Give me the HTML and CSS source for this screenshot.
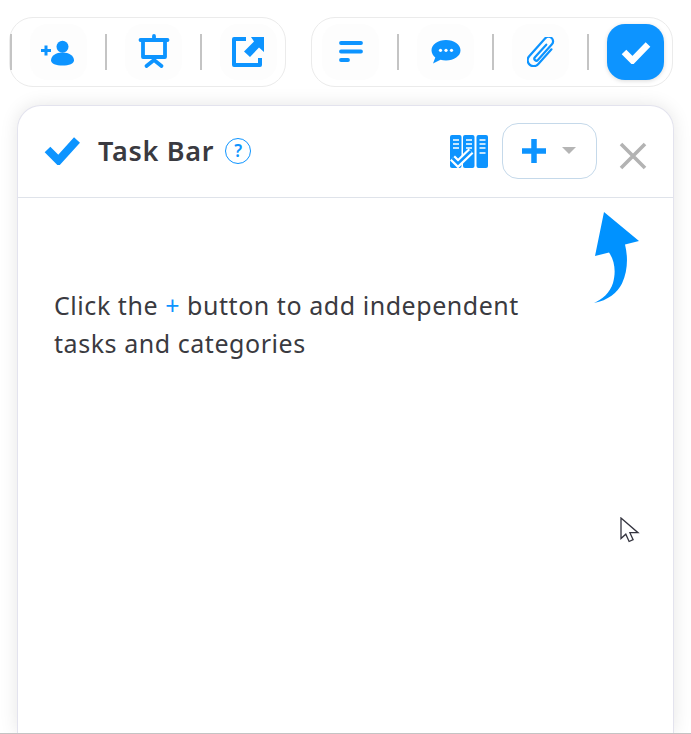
FILE: index.html
```html
<!DOCTYPE html>
<html lang="en">
<head>
    <meta charset="UTF-8">
    <meta name="viewport" content="width=device-width, initial-scale=1.0">
    <title>Task Bar</title>
    <link rel="stylesheet" href="styles.css">
</head>
<body>
    <div class="topbar">
        <div class="toolbar toolbar-left">
            <span class="divider"></span>
            <button class="tool">
                <svg width="36" height="32" viewBox="0 0 36 32"><circle cx="21.500" cy="10.700" r="6"/><path d="M10 24.500c0-5 5-8 11.500-8s11.500 3 11.500 8c0 3-5 5-11.500 5s-11.500-2-11.500-5z"/><path d="M5 9.500v10M0 14.500h10" class="line" stroke-width="3"/></svg>
            </button>
            <span class="divider"></span>
            <button class="tool">
                <svg width="34" height="36" viewBox="0 0 34 36"><path d="M3.500 6h27M6 6v17h22V6M17 2v4M9.500 32l7.500-6 7.500 6" class="line" stroke-width="3.800" stroke-linecap="round" stroke-linejoin="round"/></svg>
            </button>
            <span class="divider"></span>
            <button class="tool">
                <svg width="34" height="32" viewBox="1 0 34 32"><path d="M15 3H3v26h26v-7" class="line" stroke-width="4" stroke-linejoin="round"/><path d="M20 1h13v15l-5-4.500L19 21l-6-5.500L23 5.500z"/></svg>
            </button>
        </div>
        <div class="toolbar toolbar-right">
            <button class="tool">
                <svg width="26" height="24" viewBox="0 0 26 24"><path d="M3 3h20M3 11.500h20M3 20h7" class="line" stroke-width="3.800" stroke-linecap="round"/></svg>
            </button>
            <span class="divider"></span>
            <button class="tool">
                <svg width="30" height="26" viewBox="0 0 30 26"><path d="M15 1c8 0 14.500 4.300 14.500 10.300S23 21.500 15 21.500c-2 0-3.800-.2-5.500-.7L2 24.500l2.300-6C2 16.700.500 14.200.500 11.300.500 5.300 7 1 15 1z"/><circle cx="9.500" cy="11.300" r="1.600" class="dot"/><circle cx="15" cy="11.300" r="1.600" class="dot"/><circle cx="20.500" cy="11.300" r="1.600" class="dot"/></svg>
            </button>
            <span class="divider"></span>
            <button class="tool">
                <svg width="28" height="30" viewBox="-14 -15 28 30"><path d="M6 -9V11a6 6 0 0 1-12 0V-13a4.500 4.500 0 0 1 9 0V8a2 2 0 0 1-4 0V-9" class="line" stroke-width="2.200" stroke-linecap="round" transform="rotate(42)"/></svg>
            </button>
            <span class="divider"></span>
            <button class="tool tool-active">
                <svg width="30" height="24" viewBox="0 0 30 24"><path d="M3 12l8.500 8.500L27 4.500" class="line-white" stroke-width="6.500"/></svg>
            </button>
        </div>
    </div>

    <div class="panel">
        <div class="panel-header">
            <svg class="title-check" width="36" height="29" viewBox="0 0 36 29"><path d="M3.500 13.500l11 11L33 4" class="line" stroke-width="8"/></svg>
            <h1>Task Bar</h1>
            <span class="help">?</span>
            <div class="panel-actions">
                <svg class="book" width="38" height="34" viewBox="0 0 38 34">
                    <rect x="0" y="0" width="11.500" height="33" rx="2"/>
                    <rect x="13" y="0" width="11.500" height="33" rx="2"/>
                    <rect x="26.500" y="0" width="11.500" height="33" rx="2"/>
                    <path d="M3 5h6M3 9h6M3 13h6M16 5h6M16 9h6M16 13h6M29.500 5h6M29.500 9h6M29.500 13h6M29.500 18h6" class="line-white" stroke-width="1.500"/>
                    <path d="M2.500 23l5.500 5.500L21 16" class="line-white" stroke-width="7"/>
                    <path d="M2.500 23l5.500 5.500L21 16" class="line" stroke-width="2.600"/>
                </svg>
                <button class="add-btn">
                    <svg width="26" height="26" viewBox="0 0 26 26"><path d="M13 1v24M1 13h24" class="line" stroke-width="5.500"/></svg>
                    <span class="caret"></span>
                </button>
                <svg class="close" width="28" height="28" viewBox="0 0 28 28"><path d="M2 2l24 24M26 2L2 26" fill="none" stroke="#b3b3b3" stroke-width="3.600"/></svg>
            </div>
        </div>
        <div class="panel-body">
            <p>Click the <span class="plus">+</span> button to add independent tasks and categories</p>
        </div>
        <svg class="hint-arrow" width="46" height="92" viewBox="0 0 46 92"><path d="M10 0l35 29-14 3.500c3 12 3 26-3 39-4.500 9-14 17-28 19.500 8-3.500 16-10 19-20 3-11 2-22-4-30.500L1 44z"/></svg>
    </div>

    <svg class="cursor" width="20" height="28" viewBox="0 0 20 28"><path d="M1 1v20.500l4.800-4.300 3.300 7.300 4-1.800-3.200-7H18z" fill="#fff" stroke="#34343f" stroke-width="1.300"/></svg>
</body>
</html>
```

FILE: styles.css
```css
* {
    box-sizing: border-box;
}
body {
    margin: 0;
    height: 734px;
    overflow: hidden;
    position: relative;
    display: flex;
    flex-direction: column;
    background-color: #fff;
    border-bottom: 1px solid #c4c4c4;
    font-family: 'Noto Sans', sans-serif;
    color: #3a3a40;
}
svg {
    display: block;
    flex-shrink: 0;
    fill: #0d94ff;
}
.line {
    fill: none;
    stroke: #0d94ff;
}
.line-white {
    fill: none;
    stroke: #fff;
}
.dot {
    fill: #fff;
}
.topbar {
    display: flex;
    justify-content: flex-end;
    gap: 25px;
    padding: 17px 18px 0;
}
.toolbar {
    flex-shrink: 0;
    display: flex;
    align-items: center;
    gap: 18px;
    height: 70px;
    border: 1px solid #ebebeb;
    border-radius: 24px;
}
.toolbar-left {
    padding: 0 8px 0 0;
}
.toolbar-right {
    padding: 0 8px 0 10px;
}
.divider {
    width: 2px;
    height: 36px;
    background-color: #c4c4c4;
}
.tool {
    display: flex;
    align-items: center;
    justify-content: center;
    width: 57px;
    height: 56px;
    padding: 0;
    border: none;
    border-radius: 18px;
    background-color: #fdfdfd;
}
.tool-active {
    background-color: #0d94ff;
    box-shadow: 0 1px 4px rgba(0, 0, 0, 0.15);
}
.panel {
    flex: 1;
    position: relative;
    margin: 18px 17px 0;
    background: #fff;
    border: 1px solid #e3e3ee;
    border-bottom: none;
    border-radius: 24px 24px 0 0;
    box-shadow: 0 0 18px rgba(0, 0, 0, 0.1);
}
.panel-header {
    display: flex;
    align-items: center;
    height: 92px;
    padding: 0 26px 2px 26px;
    border-bottom: 1px solid #dfe3ea;
}
h1 {
    margin: 0 11px 0 18px;
    font-size: 27px;
    font-weight: 600;
    letter-spacing: 0.7px;
}
.help {
    display: flex;
    align-items: center;
    justify-content: center;
    width: 26px;
    height: 26px;
    border: 1.500px solid #0d94ff;
    border-radius: 50%;
    color: #0d94ff;
    font-size: 17px;
    font-weight: 600;
}
.panel-actions {
    display: flex;
    align-items: center;
    margin-left: auto;
    gap: 14px;
}
.book {
    margin-top: 2px;
}
.add-btn {
    display: flex;
    align-items: center;
    gap: 15px;
    width: 95px;
    height: 56px;
    padding: 0 0 0 18px;
    background: #fff;
    border: 1px solid #c5d9ea;
    border-radius: 16px;
}
.caret {
    width: 0;
    height: 0;
    border-left: 7px solid transparent;
    border-right: 7px solid transparent;
    border-top: 7px solid #b5b5b5;
}
.close {
    margin: 10px 0 0 8px;
}
.panel-body {
    padding: 88px 36px 0 36px;
}
.panel-body p {
    margin: 0;
    max-width: 500px;
    font-size: 25px;
    letter-spacing: 0.55px;
    line-height: 38px;
}
.plus {
    color: #0d94ff;
}
.hint-arrow {
    position: absolute;
    top: 106px;
    left: 576px;
    fill: #0092ff;
}
.cursor {
    position: absolute;
    top: 517px;
    left: 620px;
}
```
